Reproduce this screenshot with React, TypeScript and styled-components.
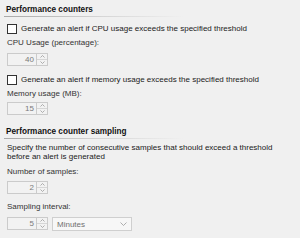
import React from 'react';
import styled, { createGlobalStyle } from 'styled-components';

const GlobalStyle = createGlobalStyle`
  html, body {
    margin: 0;
    padding: 0;
    background: #f0f0f0;
  }
  body {
    font-family: "Liberation Sans", Arial, sans-serif;
    font-size: 8px;
    color: #1a1a1a;
  }
`;

const Page = styled.div`
  width: 300px;
  height: 238px;
  padding: 0 0 0 6px;
  box-sizing: border-box;
  overflow: hidden;
`;

const SectionTitle = styled.div<{ $gap?: number }>`
  margin-top: ${(p) => p.$gap ?? 0}px;
  margin-left: -2px;
  padding: 4px 0 1px 2px;
  line-height: 11px;
  font-weight: bold;
  font-size: 8.2px;
  color: #111;
  position: relative;

  &:after {
    content: '';
    position: absolute;
    left: 0;
    bottom: -1px;
    width: 180px;
    height: 1px;
    background: linear-gradient(to right, #a8a8a8, #d6d6d6 55%, rgba(240, 240, 240, 0));
  }
`;

const CheckRow = styled.label<{ $gap: number }>`
  display: flex;
  align-items: center;
  gap: 4px;
  margin-top: ${(p) => p.$gap}px;
  margin-left: 1px;
  height: 12px;
  line-height: 12px;
`;

const Box = styled.span`
  width: 8px;
  height: 8px;
  border: 1px solid #333;
  background: #fff;
  flex: none;
`;

const Label = styled.div<{ $gap: number }>`
  margin-top: ${(p) => p.$gap}px;
  margin-left: 1px;
  height: 12px;
  line-height: 12px;
  color: #333;
`;

const Paragraph = styled.p`
  margin: 5px 0 0 1px;
  line-height: 9px;
  color: #1a1a1a;
`;

const FieldRow = styled.div<{ $gap: number }>`
  display: flex;
  gap: 4px;
  margin-top: ${(p) => p.$gap}px;
  margin-left: 1px;
  height: 13px;
`;

const Spin = styled.div`
  display: flex;
  width: 41px;
  height: 13px;
  box-sizing: border-box;
  border: 1px solid #cbcbcb;
  background: #f2f2f2;
`;

const SpinValue = styled.span`
  flex: 1;
  text-align: right;
  padding-right: 2px;
  line-height: 11px;
  color: #7a7a7a;
`;

const SpinButtons = styled.div`
  display: flex;
  flex-direction: column;
  width: 10px;
  border-left: 1px solid #cbcbcb;
`;

const SpinButton = styled.span<{ $down?: boolean }>`
  flex: 1;
  display: flex;
  align-items: center;
  justify-content: center;
  border-top: ${(p) => (p.$down ? '1px solid #d6d6d6' : 'none')};
`;

const Combo = styled.div`
  display: flex;
  align-items: center;
  justify-content: space-between;
  width: 80px;
  height: 14px;
  box-sizing: border-box;
  border: 1px solid #cfcfcf;
  background: #f7f7f7;
  padding: 0 4px 0 4px;
  color: #6f6f6f;
`;

const Arrow = ({ down }: { down?: boolean }) => (
  <svg width="5" height="3" viewBox="0 0 5 3">
    <path
      d={down ? 'M0.5 0.5 L2.5 2.5 L4.5 0.5' : 'M0.5 2.5 L2.5 0.5 L4.5 2.5'}
      fill="none"
      stroke="#9a9a9a"
      strokeWidth="0.8"
    />
  </svg>
);

const Chevron = () => (
  <svg width="7" height="4" viewBox="0 0 7 4">
    <path d="M0.5 0.5 L3.5 3.5 L6.5 0.5" fill="none" stroke="#9a9a9a" strokeWidth="0.8" />
  </svg>
);

const SpinBox = ({ value }: { value: number }) => (
  <Spin>
    <SpinValue>{value}</SpinValue>
    <SpinButtons>
      <SpinButton>
        <Arrow />
      </SpinButton>
      <SpinButton $down>
        <Arrow down />
      </SpinButton>
    </SpinButtons>
  </Spin>
);

const App: React.FC = () => {
  return (
    <>
      <GlobalStyle />
      <Page>
        <SectionTitle>Performance counters</SectionTitle>
        <CheckRow $gap={7}>
          <Box />
          Generate an alert if CPU usage exceeds the specified threshold
        </CheckRow>
        <Label $gap={2}>CPU Usage (percentage):</Label>
        <FieldRow $gap={4}>
          <SpinBox value={40} />
        </FieldRow>
        <CheckRow $gap={8}>
          <Box />
          Generate an alert if memory usage exceeds the specified threshold
        </CheckRow>
        <Label $gap={2}>Memory usage (MB):</Label>
        <FieldRow $gap={2}>
          <SpinBox value={15} />
        </FieldRow>

        <SectionTitle $gap={7}>Performance counter sampling</SectionTitle>
        <Paragraph>
          Specify the number of consecutive samples that should exceed a threshold
          <br />
          before an alert is generated
        </Paragraph>
        <Label $gap={5}>Number of samples:</Label>
        <FieldRow $gap={3}>
          <SpinBox value={2} />
        </FieldRow>
        <Label $gap={7}>Sampling interval:</Label>
        <FieldRow $gap={4}>
          <SpinBox value={5} />
          <Combo>
            Minutes
            <Chevron />
          </Combo>
        </FieldRow>
      </Page>
    </>
  );
};

export default App;
